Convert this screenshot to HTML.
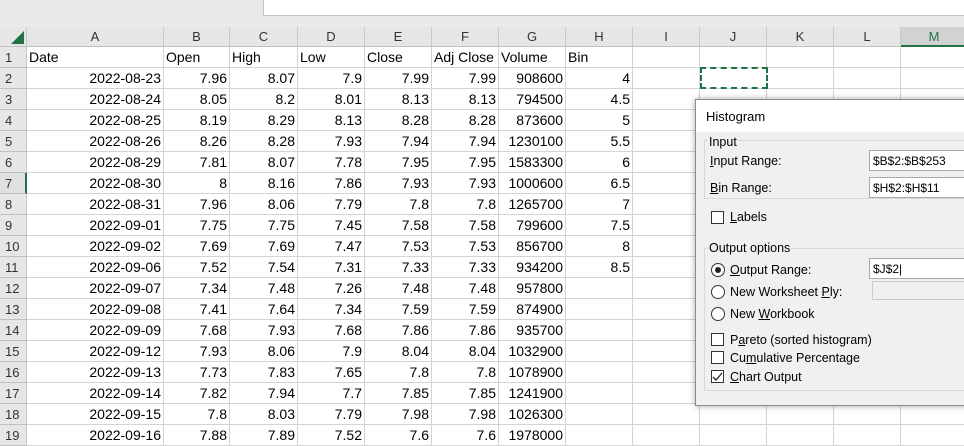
<!DOCTYPE html><html><head><meta charset="utf-8"><style>
*{margin:0;padding:0;box-sizing:border-box}
body{width:964px;height:438px;overflow:hidden;background:#fff;font-family:"Liberation Sans",sans-serif;position:relative}
#top{position:absolute;left:0;top:0;width:964px;height:27px;background:#e9e9e9}
#fx{position:absolute;left:263px;top:0;width:701px;height:16px;background:#fff;border-left:1px solid #c6c6c6;border-bottom:1px solid #c6c6c6}
.c{position:absolute;font-size:14px;line-height:21px;height:21px;border-right:1px solid #d4d4d4;border-bottom:1px solid #d4d4d4;padding:0 2px;white-space:nowrap;overflow:hidden;color:#000}
.h{position:absolute;background:#e6e6e6;color:#333;font-size:13px;text-align:center;border-right:1px solid #c8c8c8;border-bottom:1px solid #c0c0c0}
.r{text-align:right}
#dlg{position:absolute;left:695px;top:99px;width:280px;height:307px;background:#f0f0f0;border:1px solid #8a8a8a;box-shadow:0 0 6px rgba(0,0,0,.35);font-size:12.5px;color:#000}
#dlg .t{position:absolute;left:0;top:0;width:100%;height:32px;background:#fff;padding:9px 0 0 10px;font-size:13px}
.g{position:absolute;border:1px solid #d8d8d8}
.lb{position:absolute;white-space:nowrap}
.in{position:absolute;left:173px;width:120px;height:21px;background:#fff;border:1px solid #a8a8a8;padding:3px 3px;font-size:12px}
.cb{position:absolute;width:13px;height:13px;border:1px solid #333;background:#fff}
.rd{position:absolute;width:14px;height:14px;border:1px solid #333;border-radius:50%;background:#fff}
u{text-decoration:underline}
</style></head><body>
<div id="top"></div><div id="fx"></div>
<div id="g"></div>
<div style="position:absolute;left:700px;top:67px;width:68px;height:22px;border:2px dashed #217346"></div>
<div id="dlg">
<div class="t">Histogram</div>
<div class="g" style="left:8px;top:40px;width:280px;height:59px"></div>
<div class="lb" style="left:12px;top:35px;background:#f0f0f0;padding:0 1px">Input</div>
<div class="lb" style="left:14px;top:54px"><u>I</u>nput Range:</div>
<div class="in" style="top:50px">$B$2:$B$253</div>
<div class="lb" style="left:14px;top:81px"><u>B</u>in Range:</div>
<div class="in" style="top:77px">$H$2:$H$11</div>
<div class="cb" style="left:15px;top:111px"></div>
<div class="lb" style="left:34px;top:110px"><u>L</u>abels</div>
<div class="g" style="left:8px;top:148px;width:280px;height:143px"></div>
<div class="lb" style="left:12px;top:141px;background:#f0f0f0;padding:0 1px">Output options</div>
<div class="rd" style="left:15px;top:163px"><div style="position:absolute;left:3px;top:3px;width:6px;height:6px;border-radius:50%;background:#222"></div></div>
<div class="lb" style="left:34px;top:163px"><u>O</u>utput Range:</div>
<div class="in" style="top:158px">$J$2|</div>
<div class="rd" style="left:15px;top:185px"></div>
<div class="lb" style="left:34px;top:185px">New Worksheet <u>P</u>ly:</div>
<div class="in" style="top:181px;left:176px;height:19px;background:#f0f0f0;border-color:#ccc"></div>
<div class="rd" style="left:15px;top:207px"></div>
<div class="lb" style="left:34px;top:207px">New <u>W</u>orkbook</div>
<div class="cb" style="left:15px;top:233px"></div>
<div class="lb" style="left:34px;top:233px">P<u>a</u>reto (sorted histogram)</div>
<div class="cb" style="left:15px;top:251px"></div>
<div class="lb" style="left:34px;top:251px">Cu<u>m</u>ulative Percentage</div>
<div class="cb" style="left:15px;top:270px"><svg width="13" height="13" style="position:absolute;left:-1px;top:-1px"><path d="M2 7 L5 10 L11 3" stroke="#222" stroke-width="1.3" fill="none"/></svg></div>
<div class="lb" style="left:34px;top:270px"><u>C</u>hart Output</div>
</div>
<script>
var cx=[27,164,230,298,365,432,499,566,633,700,767,834,901,968];
var L="ABCDEFGHIJKLM";
var d=[["2022-08-23",7.96,8.07,7.9,7.99,7.99,908600,4],["2022-08-24",8.05,8.2,8.01,8.13,8.13,794500,4.5],["2022-08-25",8.19,8.29,8.13,8.28,8.28,873600,5],["2022-08-26",8.26,8.28,7.93,7.94,7.94,1230100,5.5],["2022-08-29",7.81,8.07,7.78,7.95,7.95,1583300,6],["2022-08-30",8,8.16,7.86,7.93,7.93,1000600,6.5],["2022-08-31",7.96,8.06,7.79,7.8,7.8,1265700,7],["2022-09-01",7.75,7.75,7.45,7.58,7.58,799600,7.5],["2022-09-02",7.69,7.69,7.47,7.53,7.53,856700,8],["2022-09-06",7.52,7.54,7.31,7.33,7.33,934200,8.5],["2022-09-07",7.34,7.48,7.26,7.48,7.48,957800],["2022-09-08",7.41,7.64,7.34,7.59,7.59,874900],["2022-09-09",7.68,7.93,7.68,7.86,7.86,935700],["2022-09-12",7.93,8.06,7.9,8.04,8.04,1032900],["2022-09-13",7.73,7.83,7.65,7.8,7.8,1078900],["2022-09-14",7.82,7.94,7.7,7.85,7.85,1241900],["2022-09-15",7.8,8.03,7.79,7.98,7.98,1026300],["2022-09-16",7.88,7.89,7.52,7.6,7.6,1978000]];
var hd=["Date","Open","High","Low","Close","Adj Close","Volume","Bin"];
var h="";
h+='<div class="h" style="left:0;top:27px;width:27px;height:20px"><svg width="27" height="20"><path d="M11 17 L24 17 L24 4 Z" fill="#217346"/></svg></div>';
for(var j=0;j<13;j++){var sel=j==12;h+='<div class="h" style="left:'+cx[j]+'px;top:27px;width:'+(cx[j+1]-cx[j])+'px;height:20px;line-height:20px;'+(sel?'background:#d2d2d2;color:#217346;border-bottom:2px solid #217346':'')+'">'+L[j]+'</div>';}
for(var i=0;i<19;i++){var y=47+i*21;var s=i==6;
h+='<div class="h" style="left:0;top:'+y+'px;width:27px;height:21px;line-height:21px;text-align:left;padding-left:5px;font-size:13px;'+(s?'border-right:2px solid #217346;background:#e0e0e0':'')+'">'+(i+1)+'</div>';
for(var j=0;j<13;j++){var v="",r="";if(i==0){v=hd[j]||"";}else{var row=d[i-1];if(row&&j<row.length){v=row[j];r=" r";}}
h+='<div class="c'+r+'" style="left:'+cx[j]+'px;top:'+y+'px;width:'+(cx[j+1]-cx[j])+'px">'+v+'</div>';}}
document.getElementById("g").innerHTML=h;
</script>
</body></html>
